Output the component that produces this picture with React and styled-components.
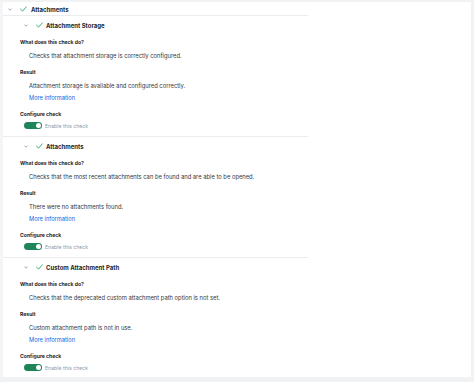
import React from 'react';
import styled, { createGlobalStyle } from 'styled-components';

const Global = createGlobalStyle`
  html, body {
    margin: 0;
    padding: 0;
    background: #f1f2f4;
  }
  body {
    font-family: Inter, "Noto Sans", Arial, sans-serif;
    color: #292a2e;
  }
`;

const Page = styled.div`
  width: 474px;
  height: 382px;
  box-sizing: border-box;
  padding: 2px 3px 5px 0;
`;

const Panel = styled.div`
  height: 100%;
  background: #fff;
  border-left: 3px solid #f4f5f6;
  box-sizing: border-box;
  overflow: hidden;
`;

const List = styled.div`
  width: 305px;
`;

const TopRow = styled.div`
  height: 14px;
  display: flex;
  align-items: center;
  padding: 1px 0 0 5px;
  box-sizing: border-box;
  border-bottom: 1px solid #ebecee;
`;

const Check = styled.section`
  & + & {
    border-top: 1px solid #ebecee;
  }
  padding-bottom: 7px;
`;

const CheckHeader = styled.div`
  height: 18px;
  display: flex;
  align-items: center;
  padding-left: 21px;
`;

const Chevron = styled.svg`
  width: 4px;
  height: 3px;
  flex: none;
`;

const Tick = styled.svg`
  width: 7px;
  height: 6px;
  flex: none;
  margin-left: ${p => p.$gap}px;
`;

const Title = styled.span`
  font-size: 6px;
  font-weight: 700;
  color: #22272b;
  margin-left: ${p => p.$gap}px;
  white-space: nowrap;
`;

const Body = styled.div`
  padding-left: 17px;
`;

const Label = styled.div`
  font-size: 5.1px;
  line-height: 8px;
  font-weight: 700;
  color: #22272b;
  margin-top: ${p => p.$top}px;
  white-space: nowrap;
`;

const Text = styled.div`
  font-size: 5.8px;
  line-height: 9px;
  color: #33373d;
  padding-left: 9px;
  margin-top: ${p => p.$top}px;
  white-space: nowrap;
`;

const Link = styled.a`
  display: block;
  font-size: 5.7px;
  line-height: 9px;
  color: #0c66e4;
  text-decoration: none;
  padding-left: 9px;
  margin-top: 3px;
`;

const ToggleRow = styled.div`
  display: flex;
  align-items: center;
  padding-left: 4px;
  margin-top: 4px;
  height: 7px;
`;

const Toggle = styled.span`
  width: 18px;
  height: 7px;
  border-radius: 4px;
  background: #1f845a;
  position: relative;
  flex: none;
  &::after {
    content: '';
    position: absolute;
    right: 1px;
    top: 1px;
    width: 5px;
    height: 5px;
    border-radius: 50%;
    background: #fff;
  }
`;

const ToggleLabel = styled.span`
  font-size: 5.2px;
  color: #8c9bab;
  margin-left: 3px;
  white-space: nowrap;
`;

const ChevronIcon = () => (
  <Chevron viewBox="0 0 4 3">
    <path d="M0.5 0.6 L2 2.2 L3.5 0.6" fill="none" stroke="#8590a2" strokeWidth="0.8" />
  </Chevron>
);

const TickIcon = ({ gap }) => (
  <Tick viewBox="0 0 7 6" $gap={gap}>
    <path d="M0.6 3.2 L2.6 5.1 L6.4 0.8" fill="none" stroke="#22a06b" strokeWidth="0.9" strokeLinecap="round" strokeLinejoin="round" />
  </Tick>
);

const checks = [
  {
    title: 'Attachment Storage',
    what: 'Checks that attachment storage is correctly configured.',
    result: 'Attachment storage is available and configured correctly.',
  },
  {
    title: 'Attachments',
    what: 'Checks that the most recent attachments can be found and are able to be opened.',
    result: 'There were no attachments found.',
  },
  {
    title: 'Custom Attachment Path',
    what: 'Checks that the deprecated custom attachment path option is not set.',
    result: 'Custom attachment path is not in use.',
  },
];

export default function App() {
  return (
    <>
      <Global />
      <Page>
        <Panel>
          <List>
            <TopRow>
              <ChevronIcon />
              <TickIcon gap={8} />
              <Title $gap={4}>Attachments</Title>
            </TopRow>
            {checks.map(c => (
              <Check key={c.title}>
                <CheckHeader>
                  <ChevronIcon />
                  <TickIcon gap={8} />
                  <Title $gap={3}>{c.title}</Title>
                </CheckHeader>
                <Body>
                  <Label $top={4}>What does this check do?</Label>
                  <Text $top={5}>{c.what}</Text>
                  <Label $top={8}>Result</Label>
                  <Text $top={5}>{c.result}</Text>
                  <Link href="#">More information</Link>
                  <Label $top={8}>Configure check</Label>
                  <ToggleRow>
                    <Toggle />
                    <ToggleLabel>Enable this check</ToggleLabel>
                  </ToggleRow>
                </Body>
              </Check>
            ))}
          </List>
        </Panel>
      </Page>
    </>
  );
}
